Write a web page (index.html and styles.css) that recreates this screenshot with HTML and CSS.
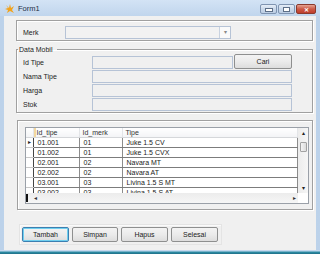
FILE: index.html
```html
<!DOCTYPE html>
<html lang="id">
<head>
    <meta charset="UTF-8" />
    <title>Form1</title>
    <link rel="stylesheet" href="styles.css">
</head>
<body>
    <div class="window">
        <div class="titlebar">
            <svg class="app-icon" width="10" height="10" viewBox="0 0 10 10">
                <polygon points="1,1 4,4 5,0 6,4 9,2 7,6 9,9 5,7 2,9 3,6 0,5 3,4" fill="#f2a31b"/>
            </svg>
            <span class="title">Form1</span>
            <div class="caption-btns">
                <span class="cap"><i class="min-glyph"></i></span>
                <span class="cap"><i class="max-glyph"></i></span>
                <span class="cap close">&#x2715;</span>
            </div>
        </div>

        <div class="client">
            <div class="panel merk-panel">
                <label>Merk</label>
                <div class="combo"><span class="combo-btn">&#x25BE;</span></div>
            </div>

            <fieldset class="group data-group">
                <legend>Data Mobil</legend>
                <div class="row">
                    <label>Id Tipe</label>
                    <div class="field"></div>
                    <button class="btn cari">Cari</button>
                </div>
                <div class="row">
                    <label>Nama Tipe</label>
                    <div class="field"></div>
                </div>
                <div class="row">
                    <label>Harga</label>
                    <div class="field"></div>
                </div>
                <div class="row">
                    <label>Stok</label>
                    <div class="field"></div>
                </div>
            </fieldset>

            <div class="group grid-group">
                <div class="grid">
                    <div class="cells">
                        <table>
                            <colgroup>
                                <col class="c-ind"><col class="c-tipe"><col class="c-merk"><col>
                            </colgroup>
                            <thead>
                                <tr><th></th><th class="sel">Id_tipe</th><th>Id_merk</th><th>Tipe</th></tr>
                            </thead>
                            <tbody>
                                <tr><td class="ind">&#x25B8;</td><td>01.001</td><td>01</td><td>Juke 1.5 CV</td></tr>
                                <tr><td class="ind"></td><td>01.002</td><td>01</td><td>Juke 1.5 CVX</td></tr>
                                <tr><td class="ind"></td><td>02.001</td><td>02</td><td>Navara MT</td></tr>
                                <tr><td class="ind"></td><td>02.002</td><td>02</td><td>Navara AT</td></tr>
                                <tr><td class="ind"></td><td>03.001</td><td>03</td><td>Livina 1.5 S MT</td></tr>
                                <tr><td class="ind"></td><td>03.002</td><td>03</td><td>Livina 1.5 S AT</td></tr>
                            </tbody>
                        </table>
                    </div>
                    <div class="vscroll">
                        <span class="arrow">&#x25B4;</span>
                        <span class="thumb"></span>
                        <span class="fill"></span>
                        <span class="arrow">&#x25BE;</span>
                    </div>
                    <div class="hscroll">
                        <span class="hbar"></span>
                        <span class="arrow">&#x25C2;</span>
                        <span class="fill"></span>
                        <span class="arrow">&#x25B8;</span>
                    </div>
                    <div class="corner"></div>
                </div>
            </div>

            <div class="btn-panel">
                <button class="btn focused">Tambah</button>
                <button class="btn w46">Simpan</button>
                <button class="btn">Hapus</button>
                <button class="btn">Selesai</button>
            </div>
        </div>
        <div class="frame-bottom"></div>
    </div>
</body>
</html>
```

FILE: styles.css
```css
body {
    margin: 0;
    padding: 0;
    font-family: "Liberation Sans", Arial, sans-serif;
    font-size: 7px;
    color: #222;
    background-color: #c4d8ee;
}
.window {
    width: 320px;
    height: 254px;
    display: flex;
    flex-direction: column;
    background: linear-gradient(to right, #bcd2ea, #c8dbf0 50%, #bcd2ea);
}

/* title bar */
.titlebar {
    height: 16px;
    display: flex;
    align-items: center;
    padding: 0 4px 0 5px;
    box-sizing: border-box;
    background: linear-gradient(#d3e3f5, #c0d5ed);
}
.app-icon {
    margin-right: 3px;
    margin-top: 1px;
}
.title {
    font-size: 7.5px;
    color: #1e2f45;
    margin-top: 1px;
}
.caption-btns {
    margin-left: auto;
    display: flex;
    gap: 1px;
    align-self: flex-start;
    margin-top: 4px;
}
.cap {
    width: 17px;
    height: 10px;
    border: 1px solid #7f94b1;
    border-radius: 2px;
    box-sizing: border-box;
    background: linear-gradient(#e6eef8, #c9d8ea 50%, #bccde3);
    display: flex;
    align-items: center;
    justify-content: center;
}
.cap.close {
    width: 20px;
    border-color: #8a3a2e;
    background: linear-gradient(#e5a393, #cc5a46 50%, #c03e2c);
    color: #fff;
    font-size: 6px;
    font-weight: bold;
}
.min-glyph {
    width: 6px;
    height: 2px;
    background: #fff;
    border: 1px solid #5d6f88;
    margin-top: 2px;
}
.max-glyph {
    width: 5px;
    height: 3px;
    background: #fff;
    border: 1px solid #5d6f88;
}

/* client area */
.client {
    flex: 1;
    margin: 0 4px;
    background-color: #f0f0f0;
    padding: 4px 0 0 12px;
    box-sizing: border-box;
}
.panel {
    border: 1px solid #a0a0a0;
    box-shadow: inset 1px 1px 0 #fff, 1px 1px 0 #fff;
    box-sizing: border-box;
}
.merk-panel {
    width: 297px;
    height: 21px;
    display: flex;
    align-items: flex-start;
    padding: 5px 0 0 6px;
}
.merk-panel label {
    width: 42px;
    line-height: 13px;
}
.combo {
    width: 166px;
    height: 13px;
    border: 1px solid #b6c3d6;
    box-sizing: border-box;
    background-color: #f2f2f2;
    display: flex;
    justify-content: flex-end;
}
.combo-btn {
    width: 10px;
    background-color: #fafafa;
    border-left: 1px solid #c8d2e0;
    color: #888;
    font-size: 6px;
    line-height: 11px;
    text-align: center;
}

/* group boxes */
.group {
    border: 1px solid #a0a0a0;
    box-shadow: inset 1px 1px 0 #fff, 1px 1px 0 #fff;
    box-sizing: border-box;
}
.data-group {
    width: 297px;
    margin: 4px 0 0 0;
    padding: 1px 20px 1px 6px;
    min-width: 0;
}
.data-group legend {
    padding: 0 5px 0 1px;
    margin-left: -5px;
    line-height: 9px;
}
.row {
    display: flex;
    align-items: center;
    height: 14px;
}
.row label {
    width: 69px;
}
.field {
    flex: 1;
    height: 13px;
    border: 1px solid #b6c3d6;
    box-sizing: border-box;
    background-color: #f0f0f0;
}
.btn {
    font-family: "Liberation Sans", Arial, sans-serif;
    font-size: 7px;
    color: #222;
    border: 1px solid #8e8f8f;
    border-radius: 2px;
    background: linear-gradient(#f3f3f3, #ebebeb 50%, #dddddd);
    padding: 0;
    box-sizing: border-box;
}
.cari {
    width: 58px;
    height: 15px;
    margin-left: 1px;
    align-self: flex-start;
    margin-top: -1px;
}

/* grid */
.grid-group {
    width: 296px;
    height: 90px;
    margin: 7px 0 0 1px;
    padding: 6px 3px 5px 7px;
}
.grid {
    width: 284px;
    height: 77px;
    border: 1px solid #9aa0a8;
    box-sizing: border-box;
    display: grid;
    grid-template-columns: 1fr 10px;
    grid-template-rows: 1fr 10px;
    background-color: #f0f0f0;
}
.cells {
    overflow: hidden;
    background-color: #fff;
}
table {
    width: 100%;
    border-collapse: collapse;
    table-layout: fixed;
}
.c-ind { width: 7px; }
.c-tipe { width: 46px; }
.c-merk { width: 43px; }
th {
    height: 9px;
    padding: 0 0 0 3px;
    font-weight: normal;
    text-align: left;
    line-height: 9px;
    background: linear-gradient(#ffffff, #f3f4f6);
    border-right: 1px solid #e3e5e8;
    border-bottom: 1px solid #d5d7da;
    color: #333;
}
th.sel {
    box-shadow: inset 2px 0 0 #f3d8a0;
}
td {
    height: 9px;
    padding: 0 0 0 4px;
    line-height: 9px;
    white-space: nowrap;
    overflow: hidden;
    border-right: 1px solid #8c8c8c;
    border-bottom: 1px solid #7c7c7c;
}
td.ind {
    padding: 0;
    font-size: 6px;
    text-align: center;
    border-bottom-color: #c8c8c8;
    border-right-color: #444;
}
.vscroll {
    display: flex;
    flex-direction: column;
    align-items: center;
    background: linear-gradient(to right, #ececec, #f6f6f6);
}
.vscroll .arrow {
    height: 10px;
    line-height: 10px;
    font-size: 6px;
    color: #222;
}
.vscroll .thumb {
    width: 7px;
    height: 10px;
    margin-top: 4px;
    border: 1px solid #a2a2a2;
    border-radius: 1px;
    box-sizing: border-box;
    background: linear-gradient(to right, #f4f4f4, #dcdcdc);
}
.fill {
    flex: 1;
}
.hscroll {
    display: flex;
    align-items: center;
    background: linear-gradient(#ececec, #f6f6f6);
}
.hbar {
    width: 2px;
    height: 8px;
    background-color: #111;
    margin-left: 0;
}
.hscroll .arrow {
    width: 8px;
    margin-left: 3px;
    text-align: center;
    font-size: 6px;
    line-height: 10px;
    color: #333;
}
.hscroll .arrow:last-child {
    margin: 0;
}
.corner {
    background-color: #fff;
}

/* bottom buttons */
.btn-panel {
    width: 203px;
    height: 21px;
    margin: 14px 0 0 3px;
    padding: 2px;
    box-sizing: border-box;
    border: 1px solid #e4e4e4;
    box-shadow: inset 1px 1px 0 #fafafa;
    display: flex;
    gap: 3px;
}
.btn-panel .btn {
    width: 47px;
    height: 15px;
}
.btn-panel .w46 {
    width: 46px;
}
.btn.focused {
    border-color: #3c7fb1;
    box-shadow: inset 0 0 0 1px #6fcfef;
}

.frame-bottom {
    height: 4px;
    background: linear-gradient(#c4d8ee 0, #c4d8ee 1px, #2d8ea6 2px, #1f6f88);
}
```
